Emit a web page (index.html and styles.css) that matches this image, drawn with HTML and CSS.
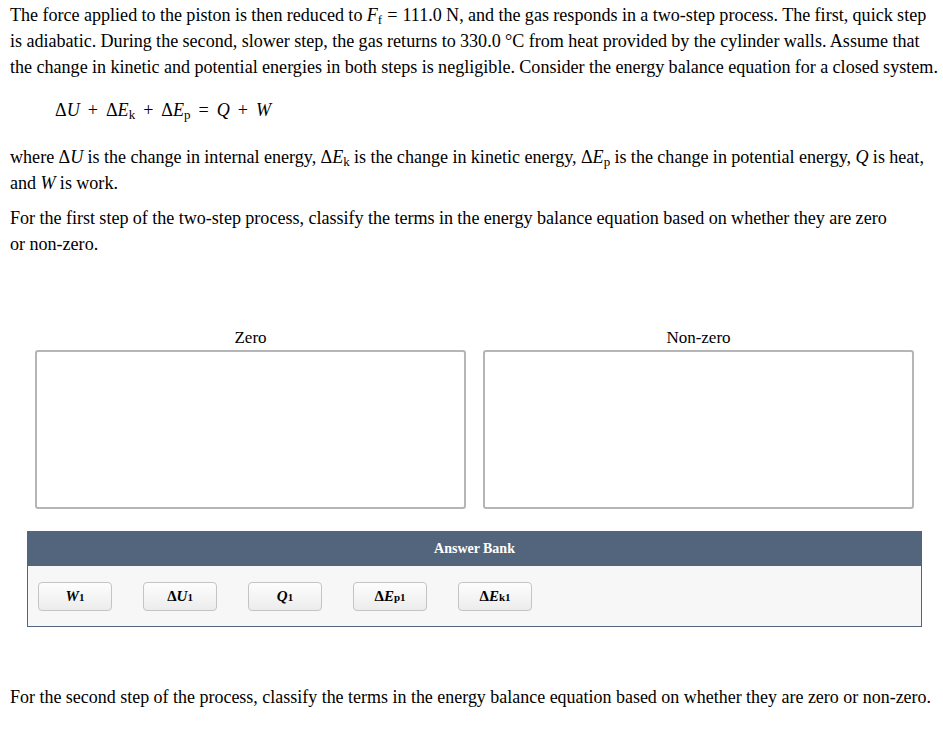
FILE: index.html
```html
<!DOCTYPE html>
<html lang="en">
<head>
  <meta charset="UTF-8">
  <meta name="viewport" content="width=device-width, initial-scale=1.0">
  <title>Energy Balance</title>
  <link rel="stylesheet" href="styles.css">
</head>
<body>
  <div class="question">
    <p class="intro">The force applied to the piston is then reduced to <span class="m"><i>F</i><sub>f</sub><span class="op">=</span>111.0 N</span>, and the gas responds in a two-step process. The first, quick step<br>is adiabatic. During the second, slower step, the gas returns to 330.0 °C from heat provided by the cylinder walls. Assume that<br>the change in kinetic and potential energies in both steps is negligible. Consider the energy balance equation for a closed system.</p>

    <p class="equation"><span class="m">Δ<i>U</i><span class="op">+</span>Δ<i>E</i><sub>k</sub><span class="op">+</span>Δ<i>E</i><sub>p</sub><span class="op">=</span><i>Q</i><span class="op">+</span><i>W</i></span></p>

    <p class="para2">where <span class="m">Δ<i>U</i></span> is the change in internal energy, <span class="m">Δ<i>E</i><sub>k</sub></span> is the change in kinetic energy, <span class="m">Δ<i>E</i><sub>p</sub></span> is the change in potential energy, <span class="m"><i>Q</i></span> is heat,<br>and <span class="m"><i>W</i></span> is work.</p>

    <p class="para3">For the first step of the two-step process, classify the terms in the energy balance equation based on whether they are zero<br>or non-zero.</p>
  </div>

  <div class="buckets">
    <div class="bucket">
      <div class="bucket-label">Zero</div>
      <div class="dropzone"></div>
    </div>
    <div class="bucket">
      <div class="bucket-label">Non-zero</div>
      <div class="dropzone"></div>
    </div>
  </div>

  <div class="answer-bank">
    <div class="bank-header">Answer Bank</div>
    <div class="bank-items">
      <div class="chip"><i>W</i><sub>1</sub></div>
      <div class="chip">Δ<i>U</i><sub>1</sub></div>
      <div class="chip"><i>Q</i><sub>1</sub></div>
      <div class="chip">Δ<i>E</i><sub>p1</sub></div>
      <div class="chip">Δ<i>E</i><sub>k1</sub></div>
    </div>
  </div>

  <p class="next-step">For the second step of the process, classify the terms in the energy balance equation based on whether they are zero or non-zero.</p>
</body>
</html>
```

FILE: styles.css
```css
body {
  margin: 0;
  padding: 2px 0 0 10px;
  font-family: "Liberation Serif", "Times New Roman", serif;
  font-size: 18.1px;
  word-spacing: -0.2px;
  color: #000;
  background: #fff;
}

p {
  margin: 0;
  line-height: 26px;
}

.intro,
.para2 {
  white-space: nowrap;
}

.m {
  white-space: nowrap;
}

.m i {
  font-style: italic;
}

.op {
  padding: 0 5px;
}

sub {
  font-size: 13px;
  vertical-align: -3px;
  line-height: 0;
}

.equation {
  margin-top: 17px;
  padding-left: 45px;
}

.equation .op {
  padding: 0 8px;
}

.para2 {
  margin-top: 21px;
}

.para3 {
  margin-top: 9px;
}

/* drop targets */
.buckets {
  display: flex;
  gap: 17px;
  margin: 68px 0 0 25px;
  width: 879px;
}

.bucket {
  flex: 1;
}

.bucket-label {
  text-align: center;
  line-height: 25px;
  font-size: 17px;
}

.dropzone {
  height: 155px;
  border: 2px solid #b5b5b5;
  border-radius: 3px;
  background: #fff;
}

/* answer bank */
.answer-bank {
  margin: 22px 0 0 17px;
  width: 893px;
  border: 1px solid #52657d;
}

.bank-header {
  background: #52657d;
  color: #fff;
  font-weight: bold;
  font-size: 14px;
  text-align: center;
  height: 34px;
  line-height: 34px;
}

.bank-items {
  background: #f7f7f7;
  display: flex;
  gap: 31px;
  padding: 16px 10px 15px;
}

.chip {
  width: 72px;
  height: 27px;
  border: 1px solid #c4c4c4;
  border-radius: 4px;
  background: linear-gradient(#fdfdfd, #ececec);
  display: flex;
  align-items: center;
  justify-content: center;
  font-weight: bold;
  font-size: 15px;
}

.chip sub {
  font-size: 11px;
  vertical-align: -3px;
}

/* the closing line is squeezed to fit on one row */
.next-step {
  margin-top: 57px;
  white-space: nowrap;
  font-size: 19px;
  word-spacing: 0;
  transform: scaleX(0.945);
  transform-origin: left center;
}
```
